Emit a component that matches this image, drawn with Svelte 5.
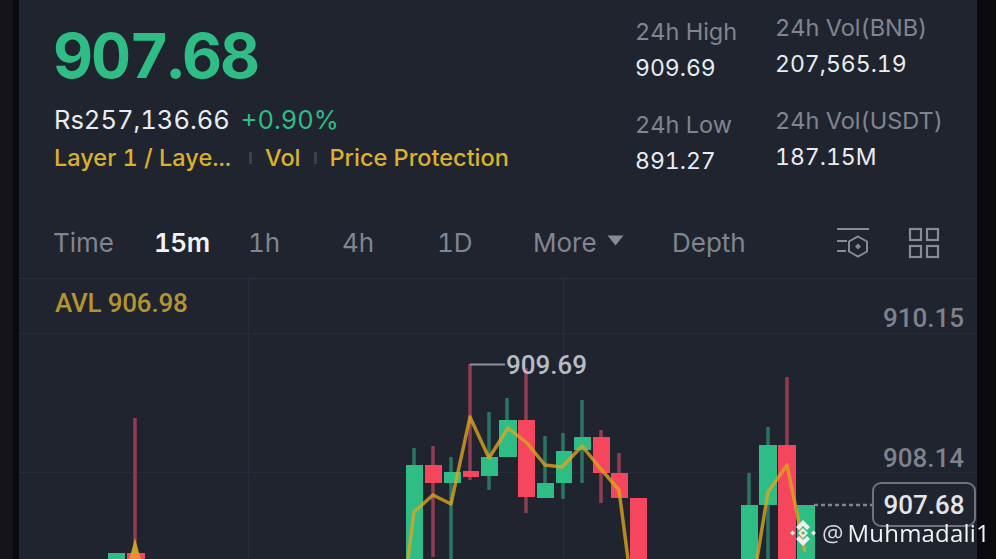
<script lang="ts">
	type Candle = { x: number; w: number; top: number; bottom: number; wx: number; hi: number; lo: number; up: boolean };

	const BOTTOM = 559;

	const candles: Candle[] = [
		{ x: 108, w: 17, top: 553, bottom: BOTTOM, wx: 116, hi: 553, lo: BOTTOM, up: true },
		{ x: 127, w: 18, top: 553, bottom: BOTTOM, wx: 135, hi: 418, lo: BOTTOM, up: false },
		{ x: 406, w: 17, top: 465, bottom: BOTTOM, wx: 414, hi: 448, lo: BOTTOM, up: true },
		{ x: 425, w: 17, top: 465, bottom: 483, wx: 433, hi: 446, lo: 557, up: false },
		{ x: 444, w: 17, top: 472, bottom: 483, wx: 451, hi: 457, lo: BOTTOM, up: true },
		{ x: 463, w: 16, top: 471, bottom: 477, wx: 470, hi: 364, lo: 480, up: false },
		{ x: 481, w: 17, top: 457, bottom: 476, wx: 489, hi: 412, lo: 490, up: true },
		{ x: 499, w: 18, top: 420, bottom: 457, wx: 507, hi: 398, lo: 457, up: true },
		{ x: 518, w: 17, top: 420, bottom: 497, wx: 526, hi: 368, lo: 513, up: false },
		{ x: 537, w: 17, top: 483, bottom: 498, wx: 545, hi: 436, lo: 498, up: true },
		{ x: 556, w: 16, top: 451, bottom: 483, wx: 563, hi: 433, lo: 499, up: true },
		{ x: 574, w: 17, top: 437, bottom: 450, wx: 582, hi: 400, lo: 483, up: true },
		{ x: 593, w: 17, top: 437, bottom: 473, wx: 601, hi: 430, lo: 503, up: false },
		{ x: 611, w: 17, top: 473, bottom: 498, wx: 619, hi: 453, lo: 498, up: false },
		{ x: 630, w: 17, top: 498, bottom: BOTTOM, wx: 638, hi: 498, lo: BOTTOM, up: false },
		{ x: 741, w: 17, top: 505, bottom: BOTTOM, wx: 749, hi: 473, lo: BOTTOM, up: true },
		{ x: 759, w: 18, top: 445, bottom: 505, wx: 768, hi: 427, lo: BOTTOM, up: true },
		{ x: 778, w: 18, top: 445, bottom: BOTTOM, wx: 787, hi: 377, lo: BOTTOM, up: false },
		{ x: 797, w: 18, top: 505, bottom: BOTTOM, wx: 806, hi: 505, lo: BOTTOM, up: true }
	];

	const avgLines = [
		'408,559 414,512 433,495 451,504 470,417 489,458 508,428 527,443 545,465 562,467 582,446 600,468 619,490 628,559',
		'757,559 768,492 787,465 805,552'
	];

	const tabs = [
		{ label: 'Time' },
		{ label: '15m', active: true },
		{ label: '1h' },
		{ label: '4h' },
		{ label: '1D' }
	];
</script>

<div class="screen">
	<main class="panel">
		<header class="summary">
			<div class="price-block">
				<div class="price">907.68</div>
				<div class="fiat"><span>Rs257,136.66</span><span class="change">+0.90%</span></div>
				<div class="tags">
					<span class="tag-first">Layer 1 / Laye...</span>
					<i></i>
					<span>Vol</span>
					<i></i>
					<span>Price Protection</span>
				</div>
			</div>
			<div class="stats stats-a">
				<div class="stat"><span>24h High</span><b>909.69</b></div>
				<div class="stat"><span>24h Low</span><b>891.27</b></div>
			</div>
			<div class="stats stats-b">
				<div class="stat"><span>24h Vol(BNB)</span><b>207,565.19</b></div>
				<div class="stat"><span>24h Vol(USDT)</span><b>187.15M</b></div>
			</div>
		</header>

		<nav class="tabs">
			{#each tabs as tab}
				<span class:active={tab.active}>{tab.label}</span>
			{/each}
			<span class="more">More<svg width="17" height="11" viewBox="0 0 17 11"><path d="M0.5 0.5H16.5L8.5 10.5Z" fill="#868b96" /></svg></span>
			<span>Depth</span>
			<svg class="tool" width="34" height="32" viewBox="0 0 34 32" fill="none" stroke="#868b96" stroke-width="2">
				<path d="M1 2H33M1 14H11M1 24H10" />
				<path d="M22 9.5L31 14.500V24.500L22 29.500L13 24.500V14.500Z" />
				<path d="M22 16.500L25 19.500L22 22.500L19 19.500Z" fill="#868b96" stroke="none" />
			</svg>
			<svg class="tool grid-icon" width="32" height="32" viewBox="0 0 32 32" fill="none" stroke="#868b96" stroke-width="2.200">
				<rect x="2" y="2" width="11" height="11" /><rect x="19" y="2" width="11" height="11" />
				<rect x="2" y="19" width="11" height="11" /><rect x="19" y="19" width="11" height="11" />
			</svg>
		</nav>

		<section class="chart">
			<svg class="plot" viewBox="19 279 958 280" width="958" height="280">
				<g stroke="#272c38" stroke-width="1">
					<path d="M19 333.500H977M19 472.500H977M248.500 279V559M563.500 279V559" />
				</g>
				{#each candles as c}
					<line x1={c.wx} x2={c.wx} y1={c.hi} y2={c.lo} stroke={c.up ? '#2a7562' : '#923c50'} stroke-width="3.500" />
					<rect x={c.x} y={c.top} width={c.w} height={c.bottom - c.top} fill={c.up ? '#2ebd85' : '#f6465d'} />
				{/each}
				<path d="M135 538L131 553H139Z" fill="#c9a227" />
				<path d="M131 553H139L141 559H129Z" fill="#f08a3c" />
				{#each avgLines as pts}
					<polyline points={pts} fill="none" stroke="#d9a521" stroke-opacity="0.8" stroke-width="3.500" stroke-linejoin="round" />
				{/each}
				<path d="M470 364.500H505" stroke="#8b909b" stroke-width="2" />
				<path d="M814 505H872" stroke="#7f848e" stroke-width="2.500" stroke-dasharray="4 3" />
			</svg>
			<span class="avl">AVL 906.98</span>
			<span class="axis axis-top">910.15</span>
			<span class="axis axis-mid">908.14</span>
			<span class="high">909.69</span>
			<span class="last">907.68</span>
			<div class="mark">
				<svg width="28" height="28" viewBox="0 0 28 28" fill="#eceef1">
					<path d="M14 1L21 8L18 11L14 7L10 11L7 8Z" />
					<path d="M14 27L7 20L10 17L14 21L18 17L21 20Z" />
					<path d="M1 14L3.500 11.500L6 14L3.500 16.500Z" />
					<path d="M24.500 11.500L27 14L24.500 16.500L22 14Z" />
					<path fill-rule="evenodd" d="M14 9L19 14L14 19L9 14ZM14 12L12 14L14 16L16 14Z" />
				</svg>
				<span class="at">@</span>
				<span class="handle">Muhmadali1</span>
			</div>
		</section>
	</main>
</div>

<style>
	:global(body) {
		margin: 0;
		background: #0c0c11;
	}

	.screen {
		width: 996px;
		height: 559px;
		overflow: hidden;
		padding-left: 19px;
		box-sizing: border-box;
		background: linear-gradient(90deg, #14141a 0 13px, #0a0a0e 13px 19px);
		font-family: Inter, Lato, sans-serif;
		font-variant-numeric: tabular-nums;
	}

	.panel {
		width: 958px;
		height: 559px;
		background: #20242f;
		display: flex;
		flex-direction: column;
		filter: blur(0.5px);
	}

	.summary {
		height: 213px;
		display: flex;
		padding-left: 35px;
	}

	.price-block {
		width: 581px;
		padding-top: 19px;
	}

	.price {
		font-size: 62px;
		line-height: 74px;
		font-weight: 700;
		color: #2ebd85;
		letter-spacing: -2px;
		margin-left: -1px;
	}

	.fiat {
		margin-top: 12px;
		display: flex;
		gap: 11px;
		font-size: 25.500px;
		line-height: 30px;
		color: #eaecef;
	}

	.change {
		color: #2ebd85;
	}

	.tags {
		margin-top: 9px;
		display: flex;
		align-items: center;
		font-size: 23.500px;
		line-height: 28px;
		font-weight: 500;
		color: #dcb02f;
	}

	.tag-first {
		width: 195px;
	}

	.tags i {
		width: 3px;
		height: 12px;
		background: #3b404c;
		margin-right: 13px;
	}

	.tags i + span + i {
		margin-left: 13px;
	}

	.stats {
		display: flex;
		flex-direction: column;
	}

	.stats-a {
		width: 140px;
		padding-top: 17px;
		gap: 22px;
	}

	.stats-b {
		padding-top: 13px;
		gap: 22px;
	}

	.stat {
		display: flex;
		flex-direction: column;
		gap: 6px;
		height: 71px;
	}

	.stat span {
		font-size: 23.500px;
		line-height: 30px;
		color: #80858f;
	}

	.stat b {
		font-size: 23px;
		line-height: 30px;
		font-weight: 400;
		color: #eaecef;
	}

	.tabs {
		height: 66px;
		padding: 0 0 6px 34px;
		display: grid;
		grid-template-columns: 101px 94px 94px 95px 96px 139px 164px 72px auto;
		align-items: center;
		font-size: 26px;
		color: #80858f;
		border-bottom: 1px solid #2a2f3b;
		box-sizing: border-box;
	}

	.active {
		color: #f2f3f5;
		font-weight: 600;
		letter-spacing: -0.5px;
	}

	.more {
		display: flex;
		align-items: center;
		gap: 10px;
	}

	.more svg {
		margin-top: -4px;
	}

	.chart {
		position: relative;
		flex: 1;
	}

	.plot {
		position: absolute;
		inset: 0;
		display: block;
	}

	.chart > span {
		position: absolute;
		font-family: Roboto, 'Liberation Sans', sans-serif;
		font-size: 26px;
		line-height: 30px;
		font-weight: 500;
	}

	.avl {
		left: 36px;
		top: 9px;
		color: #b3952f;
		letter-spacing: -0.2px;
	}

	.axis {
		right: 13px;
		color: #7d828c;
	}

	.axis-top {
		top: 24px;
	}

	.axis-mid {
		top: 164px;
	}

	.high {
		left: 487px;
		top: 71px;
		color: #b7bbc3;
	}

	.chart > .last {
		left: 853px;
		top: 203px;
		width: 104px;
		height: 45px;
		box-sizing: border-box;
		border: 2px solid #6e737e;
		border-radius: 9px;
		background: #20242f;
		display: flex;
		align-items: center;
		justify-content: center;
		color: #e3e5e9;
	}

	.mark {
		position: absolute;
		left: 770px;
		top: 240px;
		display: flex;
		align-items: center;
		color: #f2f3f5;
		font-family: 'Open Sans', sans-serif;
		font-size: 24px;
		line-height: 28px;
	}

	.at {
		margin-left: 5px;
		color: #d6d8dc;
	}

	.handle {
		margin-left: 4px;
		letter-spacing: 0.2px;
	}
</style>
